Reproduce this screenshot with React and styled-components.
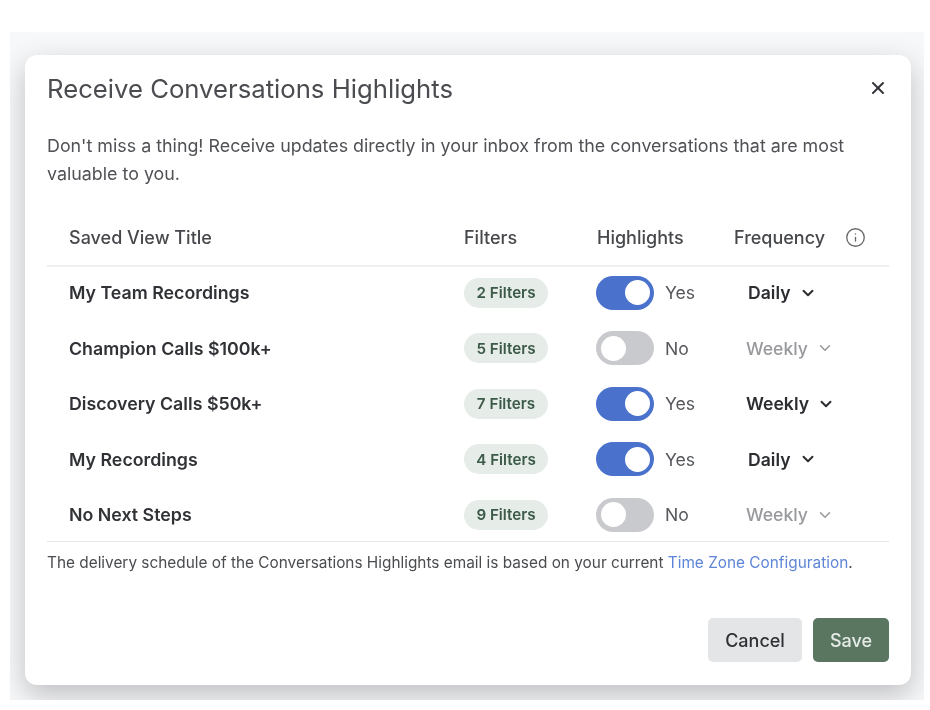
import React, { useState } from "react";
import styled, { createGlobalStyle } from "styled-components";
import { ChevronDown, Info, X } from "lucide-react";

const GlobalStyle = createGlobalStyle`
  html, body {
    margin: 0;
    background: #fff;
    font-family: "Inter", "Liberation Sans", sans-serif;
  }
`;

const rows = [
  { title: "My Team Recordings", filters: 2, on: true, freq: "Daily" },
  { title: "Champion Calls $100k+", filters: 5, on: false, freq: "Weekly" },
  { title: "Discovery Calls $50k+", filters: 7, on: true, freq: "Weekly" },
  { title: "My Recordings", filters: 4, on: true, freq: "Daily" },
  { title: "No Next Steps", filters: 9, on: false, freq: "Weekly" },
];

const Backdrop = styled.div`
  box-sizing: border-box;
  width: 914px;
  height: 668px;
  margin: 32px 0 0 10px;
  padding: 23px 13px 0 15px;
  overflow: hidden;
  background: #f7f8f9;
  filter: blur(0.4px);
`;

const Dialog = styled.div`
  box-sizing: border-box;
  width: 886px;
  height: 630px;
  padding: 14px 22px 23px;
  display: flex;
  flex-direction: column;
  background: #fff;
  border-radius: 12px;
  box-shadow: 0 10px 28px rgba(40, 44, 50, 0.28);
`;

const Header = styled.div`
  display: flex;
  align-items: center;
  justify-content: space-between;
  height: 38px;
`;

const Title = styled.h2`
  margin: 0;
  font-size: 25.7px;
  font-weight: 400;
  color: #4a4c50;
`;

const CloseButton = styled.button`
  display: flex;
  padding: 0;
  margin-right: 1px;
  border: 0;
  background: none;
  color: #33353a;
  cursor: pointer;
`;

const Intro = styled.p`
  margin: 25px 0 0;
  font-size: 17.85px;
  line-height: 28px;
  color: #4f5155;
`;

const Table = styled.div`
  margin-top: 21px;
  border-bottom: 1px solid #e6e7e8;
`;

const columns = "395px 133px 137px 1fr";

const HeadRow = styled.div`
  display: grid;
  grid-template-columns: ${columns};
  align-items: center;
  height: 56px;
  padding-left: 22px;
  border-bottom: 2px solid #eeeff0;
  font-size: 18px;
  font-weight: 500;
  color: #46484c;
`;

const FrequencyHead = styled.div`
  display: flex;
  align-items: center;
  gap: 20px;
`;

const RowList = styled.div`
  margin: -2px 0 -1.5px;
`;

const Row = styled.div`
  display: grid;
  grid-template-columns: ${columns};
  align-items: center;
  height: 55.5px;
  padding-left: 22px;
`;

const RowTitle = styled.div`
  font-size: 17.8px;
  font-weight: 600;
  color: #303236;
`;

const Pill = styled.span`
  display: inline-flex;
  align-items: center;
  justify-content: center;
  width: 84px;
  height: 30px;
  border-radius: 15px;
  background: #e6ece8;
  color: #3c5a48;
  font-size: 15.2px;
  font-weight: 600;
`;

const ToggleCell = styled.div`
  display: flex;
  align-items: center;
  gap: 11px;
  margin-left: -1px;
  font-size: 17.6px;
  color: #55575b;
`;

const Track = styled.button`
  display: flex;
  justify-content: ${(p) => (p.$on ? "flex-end" : "flex-start")};
  align-items: center;
  width: 58px;
  height: 34px;
  padding: 0 4.5px;
  border: 0;
  border-radius: 17px;
  background: ${(p) => (p.$on ? "#4a72cc" : "#c9cacd")};
  cursor: pointer;
`;

const Knob = styled.span`
  width: 25px;
  height: 25px;
  border-radius: 50%;
  background: #fff;
`;

const Select = styled.div`
  display: flex;
  align-items: center;
  gap: 8px;
  margin-left: ${(p) => (p.$daily ? "14px" : "12px")};
  font-size: 17.6px;
  font-weight: ${(p) => (p.$active ? 600 : 500)};
  color: ${(p) => (p.$active ? "#2b2d31" : "#98999d")};
`;

const Note = styled.p`
  margin: 11px 0 0;
  font-size: 15.36px;
  line-height: 20px;
  color: #4a4c50;
`;

const NoteLink = styled.a`
  color: #5f86d6;
  text-decoration: none;
`;

const Footer = styled.div`
  display: flex;
  justify-content: flex-end;
  gap: 11px;
  margin-top: auto;
`;

const Button = styled.button`
  height: 44px;
  padding: 0;
  width: ${(p) => (p.$primary ? "76px" : "94px")};
  border: 0;
  border-radius: 5px;
  background: ${(p) => (p.$primary ? "#5a7661" : "#e4e5e7")};
  color: ${(p) => (p.$primary ? "#e6ece8" : "#2f3135")};
  font-family: inherit;
  font-size: 18px;
  font-weight: 500;
  cursor: pointer;
`;

function App() {
  const [items, setItems] = useState(rows);

  function toggle(index) {
    setItems(items.map((r, i) => (i === index ? { ...r, on: !r.on } : r)));
  }

  return (
    <>
      <GlobalStyle />
      <Backdrop>
        <Dialog>
          <Header>
            <Title>Receive Conversations Highlights</Title>
            <CloseButton aria-label="Close">
              <X size={20} strokeWidth={2.4} />
            </CloseButton>
          </Header>
          <Intro>
            Don't miss a thing! Receive updates directly in your inbox from the conversations that are most valuable to you.
          </Intro>
          <Table>
            <HeadRow>
              <div>Saved View Title</div>
              <div>Filters</div>
              <div>Highlights</div>
              <FrequencyHead>
                Frequency
                <Info size={21} strokeWidth={1.5} color="#66686c" />
              </FrequencyHead>
            </HeadRow>
            <RowList>
              {items.map((r, i) => (
                <Row key={r.title}>
                  <RowTitle>{r.title}</RowTitle>
                  <div>
                    <Pill>{r.filters} Filters</Pill>
                  </div>
                  <ToggleCell>
                    <Track $on={r.on} onClick={() => toggle(i)}>
                      <Knob />
                    </Track>
                    {r.on ? "Yes" : "No"}
                  </ToggleCell>
                  <Select $active={r.on} $daily={r.freq === "Daily"}>
                    {r.freq}
                    <ChevronDown size={18} strokeWidth={r.on ? 2.6 : 2} />
                  </Select>
                </Row>
              ))}
            </RowList>
          </Table>
          <Note>
            The delivery schedule of the Conversations Highlights email is based on your current{" "}
            <NoteLink href="#">Time Zone Configuration</NoteLink>.
          </Note>
          <Footer>
            <Button>Cancel</Button>
            <Button $primary>Save</Button>
          </Footer>
        </Dialog>
      </Backdrop>
    </>
  );
}

export default App;
